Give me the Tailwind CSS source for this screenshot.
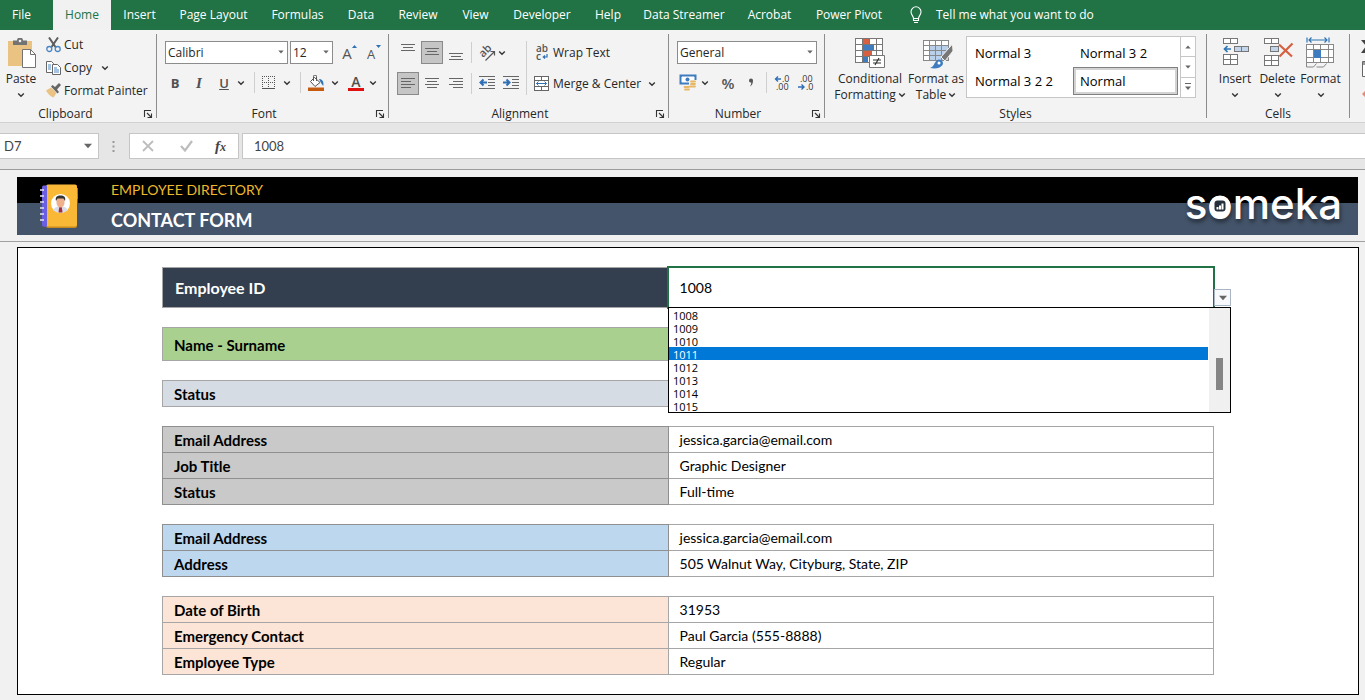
<!DOCTYPE html>
<html lang="en">
<head>
<meta charset="utf-8">
<title>Employee Directory - Contact Form</title>
<script src="https://cdn.jsdelivr.net/npm/@tailwindcss/browser@4"></script>
</head>
<body class="min-h-screen overflow-x-hidden bg-[#f1f1f1] font-['Open_Sans',sans-serif] text-[12px] leading-4 text-[#262626]">

<svg class="hidden" aria-hidden="true">
  <symbol id="chev" viewBox="0 0 8 8"><path d="M1.2 2.5 4 5.2 6.8 2.5" fill="none" stroke="#333" stroke-width="1.4"/></symbol>
  <symbol id="tri" viewBox="0 0 8 8"><path d="M1.3 2.5h5.4L4 5.5z" fill="#666"/></symbol>
  <symbol id="launch" viewBox="0 0 10 10"><path d="M1.5 8V1.5H8M4 4l4 4M8.5 4.5v4h-4" fill="none" stroke="#333" stroke-width="1.1"/></symbol>
</svg>

<!-- Ribbon tabs -->
<nav class="flex h-[30px] items-stretch overflow-hidden whitespace-nowrap bg-[#217346] text-white" aria-label="Ribbon tabs">
  <button class="w-[53px] shrink-0 pl-3 text-left">File</button>
  <button class="w-[58px] shrink-0 bg-[#f1f1f1] text-[#217346]">Home</button>
  <button class="w-[57px] shrink-0">Insert</button>
  <button class="w-[91px] shrink-0">Page Layout</button>
  <button class="w-[77px] shrink-0">Formulas</button>
  <button class="w-[50px] shrink-0">Data</button>
  <button class="w-[64px] shrink-0">Review</button>
  <button class="w-[51px] shrink-0">View</button>
  <button class="w-[82px] shrink-0">Developer</button>
  <button class="w-[50px] shrink-0">Help</button>
  <button class="w-[102px] shrink-0">Data Streamer</button>
  <button class="w-[69px] shrink-0">Acrobat</button>
  <button class="w-[90px] shrink-0">Power Pivot</button>
  <button class="ml-4 flex shrink-0 items-center gap-3.5">
    <svg class="h-[18px] w-3" viewBox="0 0 12 18" fill="none" stroke="#fff" stroke-width="1.1"><path d="M3.5 12.5C3.5 10 1 9 1 5.800a5 5 0 0 1 10 0C11 9 8.500 10 8.500 12.500zM3.500 12.500v2h5v-2M4 16.500h4"/></svg>
    <span>Tell me what you want to do</span>
  </button>
</nav>

<!-- Ribbon -->
<div class="flex h-[93px] overflow-hidden whitespace-nowrap border-b border-[#d2d2d2] bg-[#f3f3f3] pt-1">

  <section class="h-[84px] w-[157px] shrink-0 border-r border-[#8c8c8c]" aria-label="Clipboard">
    <div class="flex h-[72px]">
      <button class="flex w-[42px] flex-col items-center pt-1">
        <svg class="ml-0.5 h-[31px] w-[30px]" viewBox="0 0 30 31"><path d="M1 3h24v25H1z" fill="#eac282"/><path d="M6 2.500h4a3 3 0 0 1 6 0h4V7H6z" fill="#737373"/><circle cx="13" cy="3" r="1.300" fill="#f3f3f3"/><path d="M15.500 11.500h8l5 5v13h-13z" fill="#fff" stroke="#737373"/><path d="M23.500 11.500v5h5" fill="none" stroke="#737373"/></svg>
        <span class="mt-0.5">Paste</span>
        <svg class="mt-1 size-2"><use href="#chev"/></svg>
      </button>
      <div class="flex flex-1 flex-col pl-1">
        <button class="flex h-[22px] items-center gap-[3px]">
          <svg class="h-4 w-[15px]" viewBox="0 0 15 16" fill="none"><path d="M3 .5 9.500 10M12 .5 5.500 10" stroke="#5c5c5c" stroke-width="2"/><circle cx="3.300" cy="12" r="2.500" stroke="#4a86c5" stroke-width="1.300"/><circle cx="11.700" cy="12" r="2.500" stroke="#4a86c5" stroke-width="1.300"/></svg>Cut</button>
        <button class="flex h-[23px] items-center gap-[3px]">
          <svg class="h-4 w-[15px]" viewBox="0 0 15 16" fill="#fff" stroke="#666"><path d="M.5 1.500h5l2 2v9h-7z"/><path d="M6.500 4.500h5l3 3v7h-8z"/><path d="M2 5h3M2 7h3M2 9h3M8 8h3M8 10h5M8 12h5" stroke="#4a86c5"/></svg>Copy
          <svg class="ml-1.5 size-2"><use href="#chev"/></svg></button>
        <button class="flex h-[23px] items-center gap-[3px]">
          <svg class="h-[15px] w-[15px]" viewBox="0 0 15 15"><path d="M0 7.500 5 4.500l5.500 5.500-3 4.500C4.500 13.500 2 11 0 7.500z" fill="#eac282"/><path d="m5 3.500 1.500-1.500 2.500 2L13 0l2 2-4 4.500 2 2.500-1.500 1.500z" fill="#666"/></svg>Format Painter</button>
      </div>
    </div>
    <div class="flex items-center pr-[3px]"><span class="flex-1 pr-3 text-center">Clipboard</span><button aria-label="Clipboard settings"><svg class="size-2.5"><use href="#launch"/></svg></button></div>
  </section>

  <section class="h-[84px] w-[232px] shrink-0 border-r border-[#8c8c8c]" aria-label="Font">
    <div class="flex h-[72px] flex-col gap-[7px] pt-[7px]">
      <div class="flex h-[23px] gap-0.5 pl-2">
        <div class="relative w-[123px]"><select aria-label="Font name" class="size-full appearance-none border border-[#8c8c8c] bg-white pl-0.5"><option>Calibri</option></select><svg class="pointer-events-none absolute right-[3px] top-[7px] size-2"><use href="#tri"/></svg></div>
        <div class="relative w-[43px]"><select aria-label="Font size" class="size-full appearance-none border border-[#8c8c8c] bg-white pl-0.5"><option>12</option></select><svg class="pointer-events-none absolute right-[3px] top-[7px] size-2"><use href="#tri"/></svg></div>
        <button class="relative ml-1 w-4 text-[15px] text-[#555]" aria-label="Increase font size">A<svg class="absolute -right-0.5 top-1 h-[3px] w-[5px]" viewBox="0 0 5 3"><path d="M0 3 2.500 0 5 3z" fill="#2f6fb5"/></svg></button>
        <button class="relative ml-1.5 w-4 pt-0.5 text-[13px] text-[#555]" aria-label="Decrease font size">A<svg class="absolute -right-0.5 top-1 h-[3px] w-[5px]" viewBox="0 0 5 3"><path d="M0 0h5L2.500 3z" fill="#2f6fb5"/></svg></button>
      </div>
      <div class="flex h-[23px] items-center pl-1.5 text-[13px] text-[#505050]">
        <button class="w-6 font-bold">B</button>
        <button class="w-6 font-['Liberation_Serif',serif] text-[15px] font-bold italic">I</button>
        <button class="w-[26px] font-semibold underline">U</button>
        <button aria-label="Underline style"><svg class="size-2"><use href="#chev"/></svg></button>
        <span class="ml-[9px] h-[21px] w-px bg-[#cfcfcf]"></span>
        <button class="flex w-7 justify-center" aria-label="Borders"><svg class="size-[14px]" viewBox="0 0 14 14" fill="none" stroke="#555" shape-rendering="crispEdges"><path d="M.5 0v12M6.500 0v12M12.500 0v12M0 .5h13M0 6.500h13" stroke-dasharray="1 1"/><path d="M0 12.500h13"/></svg></button>
        <button aria-label="Border options"><svg class="size-2"><use href="#chev"/></svg></button>
        <span class="ml-[9px] h-[21px] w-px bg-[#cfcfcf]"></span>
        <button class="flex w-[30px] justify-center" aria-label="Fill colour"><svg class="h-4 w-4" viewBox="0 0 16 16"><path d="M6.500 2.500 12 7.500 7 11.500 2.500 6.500z" fill="#fff" stroke="#555"/><path d="M5.500 6V1.500a1.500 1.500 0 0 1 3 0V6" fill="none" stroke="#555"/><path d="M11 4c3 0 5 2 4.300 7L13 8z" fill="#2f75b5"/><path d="M0 12.500h16v3.500H0z" fill="#c55a11"/></svg></button>
        <button aria-label="Fill colour options"><svg class="size-2"><use href="#chev"/></svg></button>
        <button class="flex w-[30px] flex-col items-center pl-1 text-[14px] font-semibold leading-[13px]" aria-label="Font colour">A<span class="h-[3px] w-4 bg-[#e01010]"></span></button>
        <button aria-label="Font colour options"><svg class="size-2"><use href="#chev"/></svg></button>
      </div>
    </div>
    <div class="flex items-center pr-[3px]"><span class="flex-1 pr-1 text-center">Font</span><button aria-label="Font settings"><svg class="size-2.5"><use href="#launch"/></svg></button></div>
  </section>

  <section class="h-[84px] w-[280px] shrink-0 border-r border-[#8c8c8c]" aria-label="Alignment">
    <div class="flex h-[72px] pl-2 pt-[7px]">
      <div class="flex flex-col gap-2">
        <div class="flex h-[23px] items-center gap-0.5">
          <button aria-label="Top align"><svg class="h-[23px] w-[22px]" viewBox="0 0 22 23" stroke="#666" shape-rendering="crispEdges"><path d="M4 3.500h14M6 6.500h10M4 9.500h14"/></svg></button>
          <button aria-label="Middle align" class="bg-[#c5c5c5] outline -outline-offset-1 outline-[#8a8a8a]"><svg class="h-[23px] w-[22px]" viewBox="0 0 22 23" stroke="#666" shape-rendering="crispEdges"><path d="M4 7.500h14M6 10.500h10M4 13.500h14"/></svg></button>
          <button aria-label="Bottom align"><svg class="h-[23px] w-[22px]" viewBox="0 0 22 23" stroke="#666" shape-rendering="crispEdges"><path d="M4 12.500h14M6 15.500h10M4 18.500h14"/></svg></button>
          <span class="ml-0.5 h-[21px] w-px bg-[#cfcfcf]"></span>
          <button class="ml-1" aria-label="Orientation"><svg class="size-[18px] overflow-visible" viewBox="0 0 18 18"><text x="0" y="0" transform="translate(5 14) rotate(-45)" font-size="11" font-weight="600" fill="#555">ab</text><path d="M7.500 16.500 16 8M12.500 7.500h4v4" fill="none" stroke="#555" stroke-width="1.200"/></svg></button>
          <button aria-label="Orientation options"><svg class="size-2"><use href="#chev"/></svg></button>
        </div>
        <div class="flex h-[23px] items-center gap-0.5">
          <button aria-label="Align left" class="bg-[#c5c5c5] outline -outline-offset-1 outline-[#8a8a8a]"><svg class="h-[23px] w-[22px]" viewBox="0 0 22 23" stroke="#666" shape-rendering="crispEdges"><path d="M4 6.500h14M4 9.500h10M4 12.500h14M4 15.500h10"/></svg></button>
          <button aria-label="Centre"><svg class="h-[23px] w-[22px]" viewBox="0 0 22 23" stroke="#666" shape-rendering="crispEdges"><path d="M4 6.500h14M6 9.500h10M4 12.500h14M6 15.500h10"/></svg></button>
          <button aria-label="Align right"><svg class="h-[23px] w-[22px]" viewBox="0 0 22 23" stroke="#666" shape-rendering="crispEdges"><path d="M4 6.500h14M8 9.500h10M4 12.500h14M8 15.500h10"/></svg></button>
          <span class="ml-0.5 h-[21px] w-px bg-[#cfcfcf]"></span>
          <button class="ml-1" aria-label="Decrease indent"><svg class="h-[23px] w-[18px]" viewBox="0 0 18 23"><path d="M1 4.500h16M10 7.500h7M10 10.500h7M10 13.500h7M1 16.500h16" stroke="#666" shape-rendering="crispEdges"/><path d="M9 10.500H3M5.500 7.500l-3 3 3 3" fill="none" stroke="#2f6fb5" stroke-width="2"/></svg></button>
          <button class="ml-1" aria-label="Increase indent"><svg class="h-[23px] w-[18px]" viewBox="0 0 18 23"><path d="M1 4.500h16M10 7.500h7M10 10.500h7M10 13.500h7M1 16.500h16" stroke="#666" shape-rendering="crispEdges"/><path d="M1 10.500h6M4.500 7.500l3 3-3 3" fill="none" stroke="#2f6fb5" stroke-width="2"/></svg></button>
        </div>
      </div>
      <span class="ml-1.5 h-[54px] w-px bg-[#cfcfcf]"></span>
      <div class="flex flex-col gap-2 pl-[7px]">
        <button class="flex h-[23px] items-center gap-[3px]"><svg class="size-4 overflow-visible" viewBox="0 0 16 16"><text x="2" y="7" font-size="10" font-weight="600" fill="#555">ab</text><text x="2" y="15" font-size="10" font-weight="600" fill="#555">c</text><path d="M13 9v3H9.500M11 10.500 9.300 12l1.700 1.500" fill="none" stroke="#2f6fb5" stroke-width="1.200"/></svg>Wrap Text</button>
        <button class="flex h-[23px] items-center gap-[3px]"><svg class="size-4" viewBox="0 0 16 16" fill="none"><path d="M.5 .5h14v14H.5zM.5 4.500h14M.5 10.500h14M7.500.5v4M7.500 10.500v4" stroke="#666" fill="#fff" shape-rendering="crispEdges"/><path d="M2.500 7.500h10M4.500 5.500l-2 2 2 2M10.500 5.500l2 2-2 2" stroke="#2f6fb5"/></svg>Merge &amp; Center<svg class="ml-1 size-2"><use href="#chev"/></svg></button>
      </div>
    </div>
    <div class="flex items-center pr-[3px]"><span class="flex-1 pr-1 text-center">Alignment</span><button aria-label="Alignment settings"><svg class="size-2.5"><use href="#launch"/></svg></button></div>
  </section>

  <section class="h-[84px] w-[156px] shrink-0 border-r border-[#8c8c8c]" aria-label="Number">
    <div class="flex h-[72px] flex-col gap-[7px] pt-[7px]">
      <div class="relative mx-[7px] ml-2 h-[23px]"><select aria-label="Number format" class="size-full appearance-none border border-[#8c8c8c] bg-white pl-0.5"><option>General</option></select><svg class="pointer-events-none absolute right-[3px] top-[7px] size-2"><use href="#tri"/></svg></div>
      <div class="flex h-[23px] items-center pl-2.5 text-[#555]">
        <button aria-label="Accounting format"><svg class="h-[17px] w-[18px]" viewBox="0 0 18 17"><path d="M1.500 1.500h15v8h-15z" fill="#fff" stroke="#3f7cbf" stroke-width="2"/><path d="M1 1h3L1 4zM17 1h-3l3 3zM1 10V7l3 3z" fill="#3f7cbf"/><circle cx="8.500" cy="5.500" r="2" fill="#3f7cbf"/><path d="M10 6h8v11H5v-5h5z" fill="#f3f3f3"/><path d="M12 7.500h4M12 10h4M11 12.500h5M5.500 13h4M6 15.500h4" stroke="#e8b765" stroke-width="1.800" stroke-linecap="round"/></svg></button>
        <button class="ml-1" aria-label="Accounting options"><svg class="size-2"><use href="#chev"/></svg></button>
        <button class="ml-2 w-[22px] text-[15px] font-semibold">%</button>
        <button class="flex w-6 justify-center" aria-label="Comma style"><svg class="h-[9px] w-1.5" viewBox="0 0 6 9"><path d="M1 2.500a2 2 0 1 1 4 0C5 5.500 4 7.500 2 8.500 3 7 3.300 6 3.200 4.600A2 2 0 0 1 1 2.500z" fill="#555"/></svg></button>
        <span class="ml-[3px] h-[21px] w-px bg-[#cfcfcf]"></span>
        <button class="ml-1.5" aria-label="Increase decimal"><svg class="h-[18px] w-[18px] overflow-visible" viewBox="0 0 18 18"><text x="9" y="8" font-size="9" fill="#333">.0</text><text x="3" y="16" font-size="9" fill="#333">.00</text><path d="M8 5H3M5 2.500 2.500 5 5 7.500" fill="none" stroke="#2f6fb5" stroke-width="1.400"/></svg></button>
        <button class="ml-1.5" aria-label="Decrease decimal"><svg class="h-[18px] w-[18px] overflow-visible" viewBox="0 0 18 18"><text x="3" y="8" font-size="9" fill="#333">.00</text><text x="9" y="16" font-size="9" fill="#333">.0</text><path d="M1 13h6M4.500 10.500 7 13l-2.500 2.500" fill="none" stroke="#2f6fb5" stroke-width="1.400"/></svg></button>
      </div>
    </div>
    <div class="flex items-center pr-[3px]"><span class="flex-1 pr-1 text-center">Number</span><button aria-label="Number settings"><svg class="size-2.5"><use href="#launch"/></svg></button></div>
  </section>

  <section class="h-[84px] w-[382px] shrink-0 border-r border-[#8c8c8c]" aria-label="Styles">
    <div class="flex h-[72px]">
      <button class="ml-2 flex w-[74px] flex-col items-center pt-1">
        <svg class="h-[31px] w-[31px]" viewBox="0 0 31 31"><path d="M.5.5h27v24H.5z" fill="#fff"/><path d="M.5.5h27v24H.5zM.5 6.500h27M.5 12.500h27M.5 18.500h27M7.500.5v24M14.500.5v24M21.500.5v24" fill="none" stroke="#777" shape-rendering="crispEdges"/><path d="M8 1h6v5H8zM8 13h9v5H8z" fill="#d6603f"/><path d="M8 7h11v5H8zM8 19h5v5H8z" fill="#3f7cbf"/><path d="M14.500 17.500h15v12h-15z" fill="#fff" stroke="#777"/><path d="M18 22h8M18 25h8M24 20l-4 7" stroke="#333" stroke-width="1.200"/></svg>
        <span class="mt-0.5">Conditional</span>
        <span class="flex items-center gap-0.5">Formatting<svg class="size-2"><use href="#chev"/></svg></span>
      </button>
      <button class="flex w-[58px] flex-col items-center pt-1">
        <svg class="ml-0.5 h-[31px] w-[31px]" viewBox="0 0 31 31"><path d="M1.500 2.500h25v20h-25z" fill="#fff"/><path d="M8 8h18v14H8z" fill="#b9d0ea"/><path d="M1.500 2.500h25v20h-25zM1.500 7.500h25M1.500 12.500h25M1.500 17.500h25M7.500 2.500v20M13.500 2.500v20M19.500 2.500v20" fill="none" stroke="#888" shape-rendering="crispEdges"/><path d="M30.500 6 19 19l4 4L31 13z" fill="#777" stroke="#f3f3f3"/><path d="M8 30c5-1 4-8 9-8.500 3 0 5 3 3.500 5.500C18 30.500 13 31 8 30z" fill="#3f7cbf"/><circle cx="17" cy="25" r="1.500" fill="#fff"/></svg>
        <span class="mt-0.5">Format as</span>
        <span class="flex items-center gap-0.5">Table<svg class="size-2"><use href="#chev"/></svg></span>
      </button>
      <div class="ml-px mt-0.5 flex h-[62px] w-[230px] border border-[#c6c6c6] bg-white text-[13px] text-black">
        <div class="grid flex-1 grid-cols-2 grid-rows-[29px_28px] pl-px pr-0.5 pt-px">
          <button class="pl-[7px] text-left">Normal 3</button>
          <button class="pl-[7px] text-left">Normal 3 2</button>
          <button class="pl-[7px] text-left">Normal 3 2 2</button>
          <button class="border border-[#808080] pl-1.5 text-left ring-2 ring-inset ring-[#d3d3d3]">Normal</button>
        </div>
        <div class="flex w-[15px] flex-col divide-y divide-[#c6c6c6] border-l border-[#c6c6c6]">
          <button class="flex flex-1 items-center justify-center" aria-label="Scroll up"><svg class="size-2 rotate-180"><use href="#tri"/></svg></button>
          <button class="flex flex-1 items-center justify-center" aria-label="Scroll down"><svg class="size-2"><use href="#tri"/></svg></button>
          <button class="flex flex-1 items-center justify-center" aria-label="More styles"><svg class="size-2.5" viewBox="0 0 10 10"><path d="M2 1.500h6" stroke="#666"/><path d="M2 4.500h6L5 8z" fill="#666"/></svg></button>
        </div>
      </div>
    </div>
    <div class="text-center">Styles</div>
  </section>

  <section class="h-[84px] w-[143px] shrink-0 border-r border-[#8c8c8c]" aria-label="Cells">
    <div class="flex h-[72px] pl-[7px]">
      <button class="flex w-[42px] flex-col items-center pt-1">
        <svg class="ml-0.5 h-[31px] w-7" viewBox="0 0 28 31" fill="#fff" stroke="#777" shape-rendering="crispEdges"><path d="M1.500.5h14v5h-14zM8.500.5v5M1.500 16.500h14v10h-14zM8.500 16.500v10M1.500 21.500h14"/><path d="M12.500 8.500h14v5h-14zM19.500 8.500v5" fill="#c3d5ea"/><path d="M9 11H3M5.500 8 2.500 11l3 3" fill="none" stroke="#2f75b5" stroke-width="1.700" shape-rendering="auto"/></svg>
        <span class="mt-0.5">Insert</span><svg class="mt-1 size-2"><use href="#chev"/></svg>
      </button>
      <button class="flex w-[43px] flex-col items-center pt-1">
        <svg class="ml-0.5 h-[31px] w-[30px]" viewBox="0 0 30 31" fill="#fff" stroke="#777" shape-rendering="crispEdges"><path d="M.5.5h14v5H.5zM7.500.5v5M.5 17.500h14v10H.5zM7.500 17.500v10M.5 22.500h14"/><path d="M6.500 8.500h8v5h-8z" fill="#c3d5ea"/><path d="M15 6.500 28 18.500M28.500 5.500 15.500 18.500" stroke="#d6603f" stroke-width="2.200" shape-rendering="auto"/></svg>
        <span class="mt-0.5">Delete</span><svg class="mt-1 size-2"><use href="#chev"/></svg>
      </button>
      <button class="flex w-[43px] flex-col items-center pt-[3px]">
        <svg class="h-8 w-[29px]" viewBox="0 0 29 32"><path d="M.5 7.500h27v18H.5z" fill="#fff"/><path d="M.5 7.500h27v18H.5zM.5 12.500h27M.5 20.500h27M7.500 7.500v18M14.500 7.500v18M22.500 7.500v18" fill="none" stroke="#888" shape-rendering="crispEdges"/><path d="M8 13h7v8H8z" fill="#3f7cbf"/><path d="M1 .500v5M23 .500v5M3 3h18M5.500.500 3 3l2.500 2.500M18.500.500 21 3l-2.500 2.500" fill="none" stroke="#2f75b5" stroke-width="1.200"/><path d="M.500 26v4h7l3-3.500M10.500 30h7l3-3.500" fill="none" stroke="#888"/></svg>
        <span class="mt-0.5">Format</span><svg class="mt-1 size-2"><use href="#chev"/></svg>
      </button>
    </div>
    <div class="text-center">Cells</div>
  </section>

  <section class="h-[84px] w-20 shrink-0 pl-[11px]" aria-label="Editing">
    <button class="block h-[23px]" aria-label="AutoSum"><svg class="h-4 w-3" viewBox="0 0 12 16"><path d="M0 2h12v3H6l3 3-3.500 4H12v3H0l5-7z" fill="#444"/></svg></button>
    <button class="block h-[23px]" aria-label="Fill"><svg class="h-4 w-4" viewBox="0 0 16 16"><path d="M1.500.500h14v15h-14z" fill="#fff" stroke="#666"/><path d="M2 1h13v3H2z" fill="#999"/></svg></button>
    <button class="block h-[23px]" aria-label="Clear"><svg class="h-4 w-4" viewBox="0 0 16 16"><path d="M1 10 10 1l5 5-9 9z" fill="#e58a7a"/></svg></button>
  </section>
</div>

<!-- Formula bar -->
<div class="flex h-[47px] items-start border-b border-[#9b9b9b] bg-[#e6e6e6] pt-2.5 text-[13px] text-[#444]">
  <div class="relative h-[26px] w-[99px] shrink-0">
    <input aria-label="Name box" value="D7" class="size-full border border-l-0 border-[#c6c6c6] bg-white pl-1 font-['Lato',sans-serif]">
    <svg class="pointer-events-none absolute right-[5px] top-[7px] size-3"><use href="#tri"/></svg>
  </div>
  <svg class="ml-[13px] mt-2 h-[11px] w-[3px]" viewBox="0 0 3 11" fill="#999"><path d="M.500 0h2v2h-2zM.500 4.500h2v2h-2zM.500 9h2v2h-2z"/></svg>
  <div class="ml-3.5 flex h-[26px] w-[110px] shrink-0 items-center justify-between border border-[#c6c6c6] bg-white px-3">
    <button aria-label="Cancel"><svg class="size-3" viewBox="0 0 12 12"><path d="m1 1 10 10M11 1 1 11" stroke="#bdbdbd" stroke-width="1.800"/></svg></button>
    <button class="ml-1" aria-label="Enter"><svg class="h-3 w-[13px]" viewBox="0 0 13 12"><path d="m1 6 4 4.500L12 1" fill="none" stroke="#bdbdbd" stroke-width="2.200"/></svg></button>
    <button class="font-['Liberation_Serif',serif] text-[15px] font-bold italic" aria-label="Insert function">f<span class="text-[12px]">x</span></button>
  </div>
  <input aria-label="Formula" value="1008" class="ml-[3px] h-[26px] min-w-0 flex-1 border border-r-0 border-[#c6c6c6] bg-white pl-[11px] font-['Lato',sans-serif]">
</div>

<!-- Banner -->
<header class="border-b border-[#a0a0a0] pb-1.5 pl-[17px] pr-[7px] pt-[7px] font-['Lato',sans-serif]">
  <div class="relative">
    <div class="h-[26px] bg-black pl-[94px] text-[14px] leading-[26px] text-[#f0b92b]">EMPLOYEE DIRECTORY</div>
    <h1 class="h-8 bg-[#44546a] pl-[94px] text-[18px] font-bold leading-[34px] text-white">CONTACT FORM</h1>
    <svg class="absolute left-[22px] top-1.5 h-[46px] w-[42px]" viewBox="0 0 42 46"><path d="M4 3h6v41H4z" fill="#5b4fd0"/><rect x="35" y="5" width="4" height="6" fill="#b5655d"/><rect x="35" y="11" width="4" height="5" fill="#3fb55c"/><rect x="35" y="16" width="4" height="5" fill="#a33b4b"/><rect x="7" y="2" width="31" height="43" rx="2" fill="#c98a1d"/><rect x="7" y="1.500" width="31" height="42" rx="2" fill="#f9b937"/><path d="M4 2.500h4v41H4a2 2 0 0 1-1-2V4z" fill="#6a5fe0"/><path d="M1 7h4M1 13h4M1 19h4M1 25h4M1 31h4M1 37h4" stroke="#e6e6ee" stroke-width="1.300"/><circle cx="21.500" cy="20.500" r="9.500" fill="#fff"/><g transform="translate(0 1)"><path d="M14.500 26c1-3 4-3.500 7-3.500s6 .5 7 3.500a9.500 9.500 0 0 1-14 0z" fill="#d8dce8"/><path d="M20.300 22.500h2.400l.8 6h-4z" fill="#a02c3c"/><path d="M17.500 14h8v5c0 2.500-2 4.500-4 4.500s-4-2-4-4.500z" fill="#f0b08c"/><path d="M17 17c-1-4 1-5.500 4.500-5.500S27 13 26 17l-1.500-2.500h-6z" fill="#333"/></g></svg>
    <div class="absolute right-4 top-0 font-['Inter',sans-serif] text-[42px] font-medium leading-[53px] text-white [text-shadow:1px_3px_4px_rgb(0_0_0/0.5)]" aria-label="someka">s<span class="relative">o<svg class="absolute left-0.5 top-[17px] size-[22px]" viewBox="0 0 22 22"><circle cx="11" cy="11" r="10.500" fill="#fff"/><rect x="5.500" y="5.500" width="11" height="11" rx="3" fill="#26303d"/><path d="M7.500 12h2v2.500h-2zM10 10.500h2v4h-2zM12.500 8.500h2v6h-2z" fill="#fff"/></svg></span>meka</div>
  </div>
</header>

<!-- Worksheet -->
<main class="ml-[17px] mr-1.5 mt-[5px] flex flex-col gap-[19px] border border-black bg-white px-36 pb-[19px] pt-[19px] font-['Lato',sans-serif] text-[15px] leading-5 text-black">
  <div class="relative">
    <table class="w-full table-fixed border-collapse">
      <tr class="h-10"><th scope="row" class="w-[48.1%] border border-[#a6a6a6] bg-[#333f4f] pl-3 text-left text-[16px] text-white">Employee ID</th><td class="border border-[#a6a6a6] pl-[11px] text-[14px]">1008</td></tr>
    </table>
    <div class="pointer-events-none absolute -bottom-px -right-px -top-px left-[48%] border-2 border-[#217346]"></div>
    <button class="absolute -right-[17px] bottom-0.5 flex h-[17px] w-[17px] items-center justify-center border border-[#a9b4c4] bg-[#f7f9fc]" aria-label="Open list"><svg class="size-3"><use href="#tri"/></svg></button>
    <div class="absolute -right-[17px] left-[48.1%] top-10 z-10 flex h-[106px] border border-black bg-white">
      <select size="8" aria-label="Employee ID" class="flex-1 appearance-none overflow-hidden bg-white font-['Open_Sans',sans-serif] text-[11px] leading-[13px] text-black outline-none">
        <option class="h-[13px] min-h-0 p-0 pl-1 leading-3">1008</option>
        <option class="h-[13px] min-h-0 p-0 pl-1 leading-3">1009</option>
        <option class="h-[13px] min-h-0 p-0 pl-1 leading-3">1010</option>
        <option class="h-[13px] min-h-0 bg-[#0078d7] p-0 pl-1 leading-3 text-white">1011</option>
        <option class="h-[13px] min-h-0 p-0 pl-1 leading-3">1012</option>
        <option class="h-[13px] min-h-0 p-0 pl-1 leading-3">1013</option>
        <option class="h-[13px] min-h-0 p-0 pl-1 leading-3">1014</option>
        <option class="h-[13px] min-h-0 p-0 pl-1 leading-3">1015</option>
      </select>
      <div class="ml-px w-[21px] bg-[#f0f0f0] pl-[7px] pt-[50px]"><div class="h-8 w-[7px] bg-[#858585]"></div></div>
    </div>
  </div>
  <table class="w-full table-fixed border-collapse">
    <tr class="h-[33px]"><th scope="row" class="w-[48.1%] border border-[#a6a6a6] bg-[#a9d08e] pl-[11px] pt-px text-left">Name - Surname</th><td class="border border-[#a6a6a6]"></td></tr>
  </table>
  <table class="w-full table-fixed border-collapse">
    <tr class="h-[26px]"><th scope="row" class="w-[48.1%] border border-[#a6a6a6] bg-[#d6dce4] pl-[11px] text-left">Status</th><td class="border border-[#a6a6a6]"></td></tr>
  </table>
  <table class="w-full table-fixed border-collapse [&_td]:border [&_td]:border-[#a6a6a6] [&_td]:pl-[11px] [&_td]:text-[14px] [&_th]:border [&_th]:border-[#8f8f8f] [&_th]:bg-[#c9c9c9] [&_th]:pl-[11px] [&_th]:text-left">
    <tr class="h-[26px]"><th scope="row" class="w-[48.1%]">Email Address</th><td>jessica.garcia@email.com</td></tr>
    <tr class="h-[26px]"><th scope="row">Job Title</th><td>Graphic Designer</td></tr>
    <tr class="h-[26px]"><th scope="row">Status</th><td>Full-time</td></tr>
  </table>
  <table class="w-full table-fixed border-collapse [&_td]:border [&_td]:border-[#a6a6a6] [&_td]:pl-[11px] [&_td]:text-[14px] [&_th]:border [&_th]:border-[#8f8f8f] [&_th]:bg-[#bdd7ee] [&_th]:pl-[11px] [&_th]:text-left">
    <tr class="h-[26px]"><th scope="row" class="w-[48.1%]">Email Address</th><td>jessica.garcia@email.com</td></tr>
    <tr class="h-[26px]"><th scope="row">Address</th><td>505 Walnut Way, Cityburg, State, ZIP</td></tr>
  </table>
  <table class="w-full table-fixed border-collapse [&_td]:border [&_td]:border-[#a6a6a6] [&_td]:pl-[11px] [&_td]:text-[14px] [&_th]:border [&_th]:border-[#a6a6a6] [&_th]:bg-[#fce4d6] [&_th]:pl-[11px] [&_th]:text-left">
    <tr class="h-[26px]"><th scope="row" class="w-[48.1%]">Date of Birth</th><td>31953</td></tr>
    <tr class="h-[26px]"><th scope="row">Emergency Contact</th><td>Paul Garcia (555-8888)</td></tr>
    <tr class="h-[26px]"><th scope="row">Employee Type</th><td>Regular</td></tr>
  </table>
</main>
</body>
</html>
